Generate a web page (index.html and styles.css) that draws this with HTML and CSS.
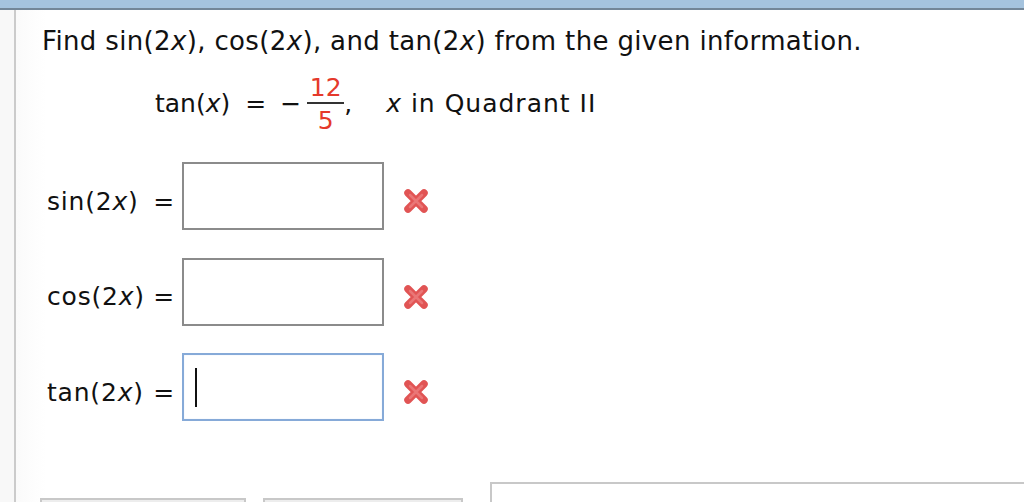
FILE: index.html
```html
<!DOCTYPE html>
<html>
<head>
<meta charset="utf-8">
<title>Double angle question</title>
<link rel="stylesheet" href="styles.css">
</head>
<body>
<div class="topbar"></div>
<div class="page">
  <div class="gutter"></div>
  <div class="content">
    <p class="title">Find sin(2<i>x</i>), cos(2<i>x</i>), and tan(2<i>x</i>) from the given information.</p>
    <div class="given">
      <span class="txt">tan(<i>x</i>)</span>
      <span class="txt eq">=</span>
      <span class="txt minus">−</span>
      <span class="frac">
        <span class="num">12</span>
        <span class="bar"></span>
        <span class="den">5</span>
      </span>
      <span class="txt comma">,</span>
      <span class="txt quad"><i>x</i> in Quadrant II</span>
    </div>
    <div class="answers">
      <div class="row">
        <div class="label"><span>sin(2<i>x</i>)</span><span>=</span></div>
        <div class="box"></div>
        <svg class="wrong" width="26" height="26" viewBox="0 0 26 26"><path d="M5 5 L21 21 M21 5 L5 21" stroke="#e15454" stroke-width="7.5" stroke-linecap="round" fill="none"/><path d="M7 7 L19 19 M19 7 L7 19" stroke="#f29292" stroke-width="2.5" stroke-linecap="round" fill="none" opacity="0.55"/></svg>
      </div>
      <div class="row">
        <div class="label"><span>cos(2<i>x</i>)</span><span>=</span></div>
        <div class="box"></div>
        <svg class="wrong" width="26" height="26" viewBox="0 0 26 26"><path d="M5 5 L21 21 M21 5 L5 21" stroke="#e15454" stroke-width="7.5" stroke-linecap="round" fill="none"/><path d="M7 7 L19 19 M19 7 L7 19" stroke="#f29292" stroke-width="2.5" stroke-linecap="round" fill="none" opacity="0.55"/></svg>
      </div>
      <div class="row">
        <div class="label"><span>tan(2<i>x</i>)</span><span>=</span></div>
        <div class="box focused"><span class="caret"></span></div>
        <svg class="wrong" width="26" height="26" viewBox="0 0 26 26"><path d="M5 5 L21 21 M21 5 L5 21" stroke="#e15454" stroke-width="7.5" stroke-linecap="round" fill="none"/><path d="M7 7 L19 19 M19 7 L7 19" stroke="#f29292" stroke-width="2.5" stroke-linecap="round" fill="none" opacity="0.55"/></svg>
      </div>
    </div>
    <div class="footer">
      <div class="btn btn1"></div>
      <div class="btn btn2"></div>
      <div class="panel"></div>
    </div>
  </div>
</div>
</body>
</html>
```

FILE: styles.css
```css
html, body {
  margin: 0;
  padding: 0;
  height: 502px;
  overflow: hidden;
  background: #ffffff;
}
body {
  font-family: "DejaVu Sans", Verdana, sans-serif;
  color: #111111;
}
.topbar {
  height: 8px;
  background: #a5c3de;
  border-bottom: 2px solid #738698;
}
.page {
  display: flex;
  height: 492px;
}
.gutter {
  width: 14px;
  background: #f8f8f8;
  border-right: 2px solid #cbcbcb;
  flex: none;
}
.content {
  flex: 1;
  background: linear-gradient(to right, #fafafa 0, #ffffff 30px);
}
.title {
  margin: 16px 0 0 0;
  padding-left: 26px;
  font-size: 26px;
  letter-spacing: 0.35px;
  line-height: 30px;
  white-space: nowrap;
}
.given {
  display: flex;
  align-items: center;
  margin-top: 20px;
  padding-left: 139px;
  font-size: 25px;
  line-height: 30px;
}
.txt {
  margin-bottom: 2px;
  white-space: pre;
}
.eq { margin-left: 15px; }
.minus { margin-left: 14px; }
.frac {
  display: flex;
  flex-direction: column;
  align-items: center;
  width: 37px;
  margin-left: 6px;
}
.num, .den {
  color: #e5392b;
  line-height: 24px;
  height: 24px;
}
.bar {
  align-self: stretch;
  height: 2px;
  background: #333333;
  margin: 2px 0 5px;
}
.comma { margin-left: 0; }
.quad { margin-left: 34px; letter-spacing: 1px; }
.answers {
  display: flex;
  flex-direction: column;
  gap: 27.5px;
  margin-top: 29px;
  padding-left: 31px;
}
.row {
  display: flex;
  align-items: center;
}
.label {
  display: flex;
  justify-content: space-between;
  width: 128px;
  margin-right: 7px;
  margin-top: 11px;
  font-size: 25px;
  line-height: 30px;
  letter-spacing: 0.8px;
  white-space: nowrap;
}
.box {
  width: 198px;
  height: 64px;
  border: 2px solid #8b8b8b;
  background: #ffffff;
  display: flex;
  align-items: center;
}
.box.focused {
  border-color: #86aad8;
  box-shadow: inset 0 0 1px #c4d6ee;
}
.caret {
  width: 2px;
  height: 39px;
  background: #111111;
  margin-left: 11px;
}
.wrong {
  margin-left: 19px;
  margin-top: 10px;
}
.footer {
  display: flex;
  align-items: flex-start;
  margin-top: 61px;
  padding-left: 24px;
}
.btn {
  height: 4px;
  background: #ededed;
  border: 2px solid #c8c8c8;
  border-bottom: 0;
  margin-top: 16px;
}
.btn1 { width: 202px; }
.btn2 { width: 196px; margin-left: 17px; }
.panel {
  flex: 1;
  height: 18px;
  margin-left: 27px;
  margin-right: -10px;
  border: 2px solid #c8c8c8;
  border-bottom: 0;
  background: #ffffff;
}
```
